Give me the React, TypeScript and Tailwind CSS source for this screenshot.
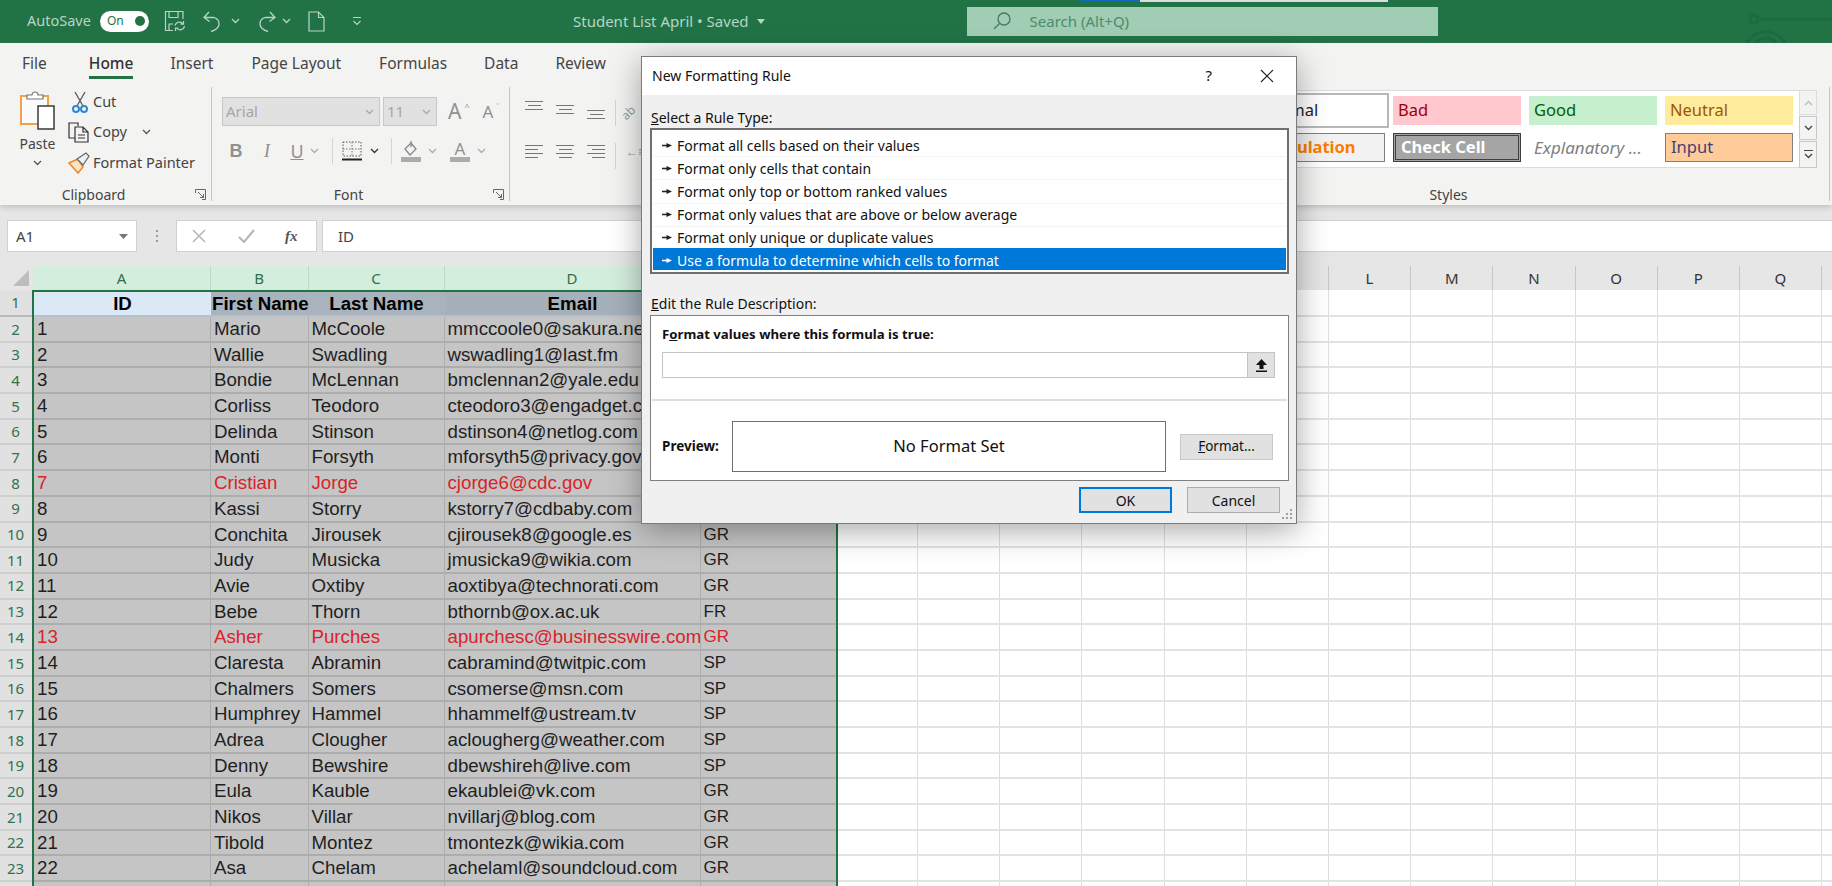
import type { ReactNode } from "react"

const ui = "font-['Noto_Sans',sans-serif]"
const cellFont = "font-['Liberation_Sans',Arial,sans-serif]"

const students: [string, string, string, string, string][] = [
	["1", "Mario", "McCoole", "mmccoole0@sakura.ne.jp", ""],
	["2", "Wallie", "Swadling", "wswadling1@last.fm", ""],
	["3", "Bondie", "McLennan", "bmclennan2@yale.edu", ""],
	["4", "Corliss", "Teodoro", "cteodoro3@engadget.com", ""],
	["5", "Delinda", "Stinson", "dstinson4@netlog.com", ""],
	["6", "Monti", "Forsyth", "mforsyth5@privacy.gov", ""],
	["7", "Cristian", "Jorge", "cjorge6@cdc.gov", ""],
	["8", "Kassi", "Storry", "kstorry7@cdbaby.com", ""],
	["9", "Conchita", "Jirousek", "cjirousek8@google.es", "GR"],
	["10", "Judy", "Musicka", "jmusicka9@wikia.com", "GR"],
	["11", "Avie", "Oxtiby", "aoxtibya@technorati.com", "GR"],
	["12", "Bebe", "Thorn", "bthornb@ox.ac.uk", "FR"],
	["13", "Asher", "Purches", "apurchesc@businesswire.com", "GR"],
	["14", "Claresta", "Abramin", "cabramind@twitpic.com", "SP"],
	["15", "Chalmers", "Somers", "csomerse@msn.com", "SP"],
	["16", "Humphrey", "Hammel", "hhammelf@ustream.tv", "SP"],
	["17", "Adrea", "Clougher", "aclougherg@weather.com", "SP"],
	["18", "Denny", "Bewshire", "dbewshireh@live.com", "SP"],
	["19", "Eula", "Kauble", "ekaublei@vk.com", "GR"],
	["20", "Nikos", "Villar", "nvillarj@blog.com", "GR"],
	["21", "Tibold", "Montez", "tmontezk@wikia.com", "GR"],
	["22", "Asa", "Chelam", "achelaml@soundcloud.com", "GR"],
	["", "", "", "", ""],
]

const ruleTypes = [
	"Format all cells based on their values",
	"Format only cells that contain",
	"Format only top or bottom ranked values",
	"Format only values that are above or below average",
	"Format only unique or duplicate values",
	"Use a formula to determine which cells to format",
]

const Chevron = ({ className = "", color = "#777" }: { className?: string; color?: string }) => (
	<svg width="9" height="6" viewBox="0 0 9 6" className={className} fill="none" stroke={color} strokeWidth="1.3">
		<path d="M1 1l3.5 3.5L8 1" />
	</svg>
)

const TitleIcons = () => (
	<div className="flex items-center ml-[15px] text-[#b9d4c5]">
		<svg width="22" height="22" viewBox="0 0 22 22" fill="none" stroke="currentColor" strokeWidth="1.2">
			<path d="M9 20.5H1.5v-19h17.5v7.5M5 1.5v6h9v-6M5 20v-6h4" />
			<path d="M11 15.5a4.5 4.5 0 0 1 8-1.5M20.5 16a4.5 4.5 0 0 1-8 2M19.5 11v3.2h-3M11.5 21v-3h3" />
		</svg>
		<svg width="22" height="22" viewBox="0 0 22 22" fill="none" stroke="currentColor" strokeWidth="1.3" className="ml-[16px]">
			<path d="M7 2L2 7.5l5.5 4M2.5 7.5H12a7 7 0 0 1 5 7c0 3-4 6-8 7" />
		</svg>
		<Chevron color="#b9d4c5" className="ml-[7px]" />
		<svg width="22" height="22" viewBox="0 0 22 22" fill="none" stroke="currentColor" strokeWidth="1.3" className="ml-[15px]">
			<path d="M15 2l5 5.5-5.5 4M19.5 7.5H10a7 7 0 0 0-5 7c0 3 4 6 8 7" />
		</svg>
		<Chevron color="#b9d4c5" className="ml-[5px]" />
		<svg width="17" height="21" viewBox="0 0 17 21" fill="none" stroke="currentColor" strokeWidth="1.2" className="ml-[17px]">
			<path d="M1 1h9.5L16 6.5V20H1zM10.5 1v5.5H16" />
		</svg>
		<svg width="10" height="10" viewBox="0 0 10 10" fill="none" stroke="currentColor" strokeWidth="1.1" className="ml-[27px]">
			<path d="M1 1.5h8M1.5 5l3.5 3.5L8.5 5" />
		</svg>
	</div>
)

const TitleBar = () => (
	<div className={`${ui} relative h-[43px] flex items-center bg-[#217346] text-[#b9d4c5] text-[15px] border-b border-[#2a7a4e]`}>
		<span className="ml-[27px] w-[65px] text-[14.5px]">AutoSave</span>
		<div className="ml-[8px] w-[49px] h-[21px] rounded-full bg-white flex items-center justify-between pl-[7px] pr-[4px] text-[#217346] text-[12px]">
			<span>On</span>
			<span className="w-[10px] h-[10px] rounded-full bg-[#217346]" />
		</div>
		<TitleIcons />
		<span className="ml-[211px] whitespace-nowrap">Student List April • Saved</span>
		<svg width="8" height="5" viewBox="0 0 8 5" className="ml-[8px]" fill="#b9d4c5">
			<path d="M0 0h8L4 5z" />
		</svg>
		<div className="ml-[202px] w-[471px] h-[29px] bg-[#a0cdb3] flex items-center text-[#4d8c6c]">
			<svg width="20" height="20" viewBox="0 0 20 20" fill="none" stroke="#3d7f5c" strokeWidth="1.3" className="ml-[25px]">
				<circle cx="12" cy="8" r="6" />
				<path d="M7.5 12.5L2 18" />
			</svg>
			<span className="ml-[18px]">Search (Alt+Q)</span>
		</div>
		<div className="absolute top-0 left-[1079px] w-[61px] h-[2px] bg-[#0f6cbd]" />
		<div className="absolute top-0 left-[1140px] w-[248px] h-[2px] bg-[#dcdcdc]" />
		<svg width="90" height="43" viewBox="0 0 90 43" fill="none" stroke="#1c6a40" strokeWidth="3" className="absolute right-0 top-0">
			<circle cx="12" cy="19" r="4" />
			<path d="M16 19h74M5 43a22 22 0 0 1 38 0M14 43a12 12 0 0 1 20 0" />
		</svg>
	</div>
)

const Tabs = () => (
	<div className={`${ui} h-[37px] pt-[4px] flex items-center text-[15.5px] text-[#444]`}>
		<span className="ml-[22px]">File</span>
		<div className="ml-[42px] relative font-medium text-[#333]">
			Home
			<span className="absolute left-0 right-0 top-[24px] h-[3px] bg-[#217346]" />
		</div>
		<span className="ml-[37px]">Insert</span>
		<span className="ml-[38px]">Page Layout</span>
		<span className="ml-[38px]">Formulas</span>
		<span className="ml-[37px]">Data</span>
		<span className="ml-[37px]">Review</span>
	</div>
)

const Launcher = () => (
	<svg width="11" height="11" viewBox="0 0 11 11" fill="none" stroke="#666" strokeWidth="1">
		<path d="M.5 4V.5H10.5V10.5H7M3 3l5.5 5.5M8.5 5v3.5H5" />
	</svg>
)

const RibbonGroup = ({ label, width, children, launcher }: { label: string; width: string; children: ReactNode; launcher?: boolean }) => (
	<div className={`${width} shrink-0 h-[114px] flex flex-col border-r border-[#c6c6c6] relative`}>
		<div className="flex-1 min-h-0">{children}</div>
		<div className={`h-[14px] flex items-center justify-center text-[14px] text-[#444] ${launcher ? "pr-[24px]" : ""}`}>{label}</div>
		{launcher && (
			<div className="absolute right-[5px] bottom-[1px]">
				<Launcher />
			</div>
		)}
	</div>
)

const Clipboard = () => (
	<div className="flex h-full">
		<div className="w-[68px] flex flex-col items-center pl-[7px] pt-[4px]">
			<svg width="36" height="39" viewBox="0 0 36 39" fill="none">
				<path d="M1 5h27v28H1z" fill="#fbfbfb" stroke="#eea24a" strokeWidth="2" />
				<path d="M7 8V4h5a3 3 0 0 1 6 0h5v4z" fill="#fff" stroke="#777" strokeWidth="1.2" />
				<path d="M18 15h16v23H18z" fill="#fff" stroke="#3a3a3a" strokeWidth="1.5" />
			</svg>
			<span className="text-[14px] text-[#444] mt-[4px] leading-[20px]">Paste</span>
			<Chevron className="mt-[6px]" color="#555" />
		</div>
		<div className="flex flex-col text-[14.5px] text-[#444]">
			<div className="h-[30px] flex items-center">
				<svg width="18" height="22" viewBox="0 0 18 22" fill="none" className="ml-[3px] mr-[4px]">
					<path d="M4 1l8 14M14 1L6 15" stroke="#555" strokeWidth="1.3" />
					<circle cx="5" cy="18" r="3" stroke="#2b88d8" strokeWidth="2" />
					<circle cx="13" cy="18" r="3" stroke="#2b88d8" strokeWidth="2" />
				</svg>
				Cut
			</div>
			<div className="h-[30px] flex items-center">
				<svg width="22" height="22" viewBox="0 0 22 22" fill="none" stroke="#333" strokeWidth="1.2" className="mr-[3px]">
					<path d="M7 17H1V2h9v3" />
					<path d="M7 6h8l5 5v10H7zM15 6v5h5M10 14h7M10 17h7" />
				</svg>
				Copy
				<Chevron className="ml-[15px]" color="#555" />
			</div>
			<div className="h-[31px] flex items-center">
				<svg width="22" height="22" viewBox="0 0 22 22" fill="none" className="mr-[3px]">
					<path d="M1 11l9-4 5 8-5 6z" fill="#fbe3c4" stroke="#ec8a2f" strokeWidth="1.6" />
					<path d="M9 7l9-6 3 3-6 9z" fill="#eee" stroke="#666" strokeWidth="1.2" />
				</svg>
				Format Painter
			</div>
		</div>
	</div>
)

const Combo = ({ text, width }: { text: string; width: string }) => (
	<div className={`${width} h-[29px] bg-[#e1e1e1] border border-[#c8c8c8] flex items-center justify-between pl-[3px] pr-[5px] text-[#a6a6a6] text-[15px]`}>
		<span>{text}</span>
		<Chevron color="#aaa" />
	</div>
)

const Font = () => (
	<div className="pl-[10px] pt-[10px] text-[#909090]">
		<div className="flex items-center gap-[3px]">
			<Combo text="Arial" width="w-[158px]" />
			<Combo text="11" width="w-[54px]" />
			<span className="ml-[8px] text-[21px] leading-none">A</span>
			<span className="text-[9px] -mt-[10px]">^</span>
			<span className="ml-[10px] text-[17px] leading-none">A</span>
			<span className="text-[9px] -mt-[10px]">˅</span>
		</div>
		<div className="flex items-center h-[22px] mt-[14px] text-[18px]">
			<span className="ml-[4px] w-[20px] text-center font-bold font-['Liberation_Sans',sans-serif]">B</span>
			<span className="ml-[11px] w-[20px] text-center italic font-['Liberation_Serif',serif]">I</span>
			<span className="ml-[10px] w-[20px] text-center underline">U</span>
			<Chevron color="#aaa" className="ml-[3px]" />
			<span className="ml-[13px] w-px h-[26px] bg-[#d4d4d4]" />
			<svg width="20" height="20" viewBox="0 0 20 20" fill="none" className="ml-[9px]">
				<path d="M1 1h18v14H1z" stroke="#555" strokeWidth="1" strokeDasharray="1.5 1.5" />
				<path d="M10 1v14M1 8h18" stroke="#777" strokeWidth="1" strokeDasharray="1.5 1.5" />
				<path d="M0 18.5h20" stroke="#222" strokeWidth="2" />
			</svg>
			<Chevron color="#333" className="ml-[8px]" />
			<span className="ml-[12px] w-px h-[26px] bg-[#d4d4d4]" />
			<svg width="20" height="22" viewBox="0 0 20 22" fill="none" className="ml-[9px]">
				<path d="M4 9l6-6 5 6-6 6z" stroke="#888" strokeWidth="1.3" />
				<path d="M10 1v6" stroke="#888" strokeWidth="1.3" />
				<rect y="17" width="20" height="5" fill="#ababab" />
			</svg>
			<Chevron color="#aaa" className="ml-[7px]" />
			<div className="ml-[13px] w-[20px] h-[22px] flex flex-col items-center">
				<span className="text-[17px] leading-[17px]">A</span>
				<span className="w-[20px] h-[5px] bg-[#ababab]" />
			</div>
			<Chevron color="#aaa" className="ml-[7px]" />
		</div>
	</div>
)

const AlignLines = ({ widths, className = "" }: { widths: string[]; className?: string }) => (
	<div className={`w-[18px] flex flex-col gap-[3px] ${className}`}>
		{widths.map((w, i) => (
			<span key={i} className={`${w} h-px bg-[#777]`} />
		))}
	</div>
)

const Alignment = () => (
	<div className="pl-[15px]">
		<div className="flex h-[46px]">
			<AlignLines widths={["w-full self-center", "w-[13px] self-center", "w-full self-center"]} className="pt-[14px]" />
			<AlignLines widths={["w-full", "w-[13px] self-center", "w-full"]} className="ml-[13px] pt-[18px]" />
			<AlignLines widths={["w-full", "w-[13px] self-center", "w-full"]} className="ml-[13px] pt-[23px]" />
			<span className="ml-[10px] mt-[13px] w-px h-[26px] bg-[#d4d4d4]" />
			<span className="ml-[10px] mt-[15px] text-[12px] text-[#999] -rotate-45">ab</span>
		</div>
		<div className="flex pt-[12px] items-start">
			<AlignLines widths={["w-full", "w-[13px]", "w-full", "w-[13px]"]} />
			<AlignLines widths={["w-full", "w-[13px] self-center", "w-full", "w-[13px] self-center"]} className="ml-[13px]" />
			<AlignLines widths={["w-full", "w-[13px] self-end", "w-full", "w-[13px] self-end"]} className="ml-[13px]" />
			<span className="ml-[10px] -mt-[2px] w-px h-[26px] bg-[#d4d4d4]" />
			<span className="ml-[10px] text-[12px] leading-[14px] text-[#999]">←≡</span>
		</div>
	</div>
)

const styleCell = "h-[29px] flex items-center pl-[5px] text-[16.5px] leading-none truncate"

const StylesGallery = () => (
	<div className="h-full flex justify-end pt-[3px]">
		<div className="w-[546px] h-[78px] bg-white border-y border-[#dcdcdc] grid grid-cols-[128px_128px_128px_128px] content-start gap-x-[8px] gap-y-[8px] pl-[4px] pt-[5px] items-start text-[#222]">
			<div className={`${styleCell} bg-white border-2 border-[#b8b8b8] -mx-[4px] -my-[3px] h-[35px]`}>Normal</div>
			<div className={`${styleCell} bg-[#ffc7ce] text-[#9c0006]`}>Bad</div>
			<div className={`${styleCell} bg-[#c6efce] text-[#006100]`}>Good</div>
			<div className={`${styleCell} bg-[#ffeb9c] text-[#9c5700]`}>Neutral</div>
			<div className={`${styleCell} h-[28px] bg-[#f2f2f2] border border-[#7f7f7f] text-[#fa7d00] font-bold text-[15.5px]`}>Calculation</div>
			<div className={`${styleCell} h-[28px] bg-[#a5a5a5] border-[3px] border-double border-[#3f3f3f] text-white font-bold text-[15.5px]`}>Check Cell</div>
			<div className={`${styleCell} h-[28px] italic text-[#7f7f7f] text-[17px]`}>Explanatory ...</div>
			<div className={`${styleCell} h-[28px] bg-[#ffcc99] border border-[#7f7f7f] text-[#3f3f76]`}>Input</div>
		</div>
		<div className="w-[18px] h-[78px] mr-[12px] flex flex-col gap-px">
			<div className="h-[25px] border border-[#dcdcdc] flex items-center justify-center">
				<Chevron className="rotate-180" color="#bbb" />
			</div>
			<div className="h-[24px] border border-[#c8c8c8] flex items-center justify-center">
				<Chevron color="#444" />
			</div>
			<div className="h-[27px] border border-[#c8c8c8] flex flex-col gap-[2px] items-center justify-center">
				<span className="w-[9px] h-px bg-[#444]" />
				<Chevron color="#444" />
			</div>
		</div>
	</div>
)

const Ribbon = () => (
	<div className={`${ui} h-[162px] bg-[#f3f3f2] shadow-[0_2px_6px_rgba(0,0,0,0.18)] relative`}>
		<Tabs />
		<div className="flex pt-[7px]">
			<RibbonGroup label="Clipboard" width="w-[212px]" launcher>
				<Clipboard />
			</RibbonGroup>
			<RibbonGroup label="Font" width="w-[298px]" launcher>
				<Font />
			</RibbonGroup>
			<RibbonGroup label="Alignment" width="w-[558px]">
				<Alignment />
			</RibbonGroup>
			<RibbonGroup label="Styles" width="w-[762px]">
				<StylesGallery />
			</RibbonGroup>
		</div>
	</div>
)

const FormulaBar = () => (
	<div className={`${ui} h-[61px] bg-[#e6e6e6] pt-[15px] flex text-[#444] text-[15px]`}>
		<div className="ml-[7px] w-[130px] h-[32px] bg-white border border-[#d0d0d0] flex items-center justify-between pl-[8px] pr-[8px]">
			A1
			<svg width="9" height="5" viewBox="0 0 9 5" fill="#777">
				<path d="M0 0h9L4.5 5z" />
			</svg>
		</div>
		<div className="w-[39px] flex flex-col items-center justify-center gap-[3px] h-[32px]">
			<span className="w-[2px] h-[2px] bg-[#999]" />
			<span className="w-[2px] h-[2px] bg-[#999]" />
			<span className="w-[2px] h-[2px] bg-[#999]" />
		</div>
		<div className="w-[141px] h-[32px] bg-white border border-[#d0d0d0] flex items-center text-[#aaa]">
			<svg width="14" height="14" viewBox="0 0 14 14" fill="none" stroke="#b5b5b5" strokeWidth="1.5" className="ml-[15px]">
				<path d="M1 1l12 12M13 1L1 13" />
			</svg>
			<svg width="17" height="14" viewBox="0 0 17 14" fill="none" stroke="#b5b5b5" strokeWidth="2" className="ml-[32px]">
				<path d="M1 8l5 5L16 1" />
			</svg>
			<span className="ml-[30px] italic font-bold text-[#555] font-['Liberation_Serif',serif] text-[15px]">fx</span>
		</div>
		<div className="ml-[5px] flex-1 h-[32px] bg-white border-y border-l border-[#d0d0d0] flex items-center pl-[15px]">ID</div>
	</div>
)

const RowNumbers = () => (
	<div className="w-[32px] shrink-0">
		<div className="h-[27px] bg-[#e1e1e1] border-b-2 border-[#b9b9b9] flex items-center justify-center text-[#2f7350] text-[15px] pr-[1px]">1</div>
		{students.map((_, i) => (
			<div key={i} className="h-[25.7px] bg-[#e1e1e1] border-b-2 border-[#cfcfcf] flex items-center justify-center text-[#2f7350] text-[15px] pr-[1px]">
				{i + 2}
			</div>
		))}
	</div>
)

const colWidths = ["w-[177px]", "w-[97.5px]", "w-[136px]", "w-[256px]", "w-[135.5px]"]

const SelectedBlock = () => (
	<div className={`${cellFont} w-[806px] shrink-0 border-x-2 border-t-2 border-[#217346] text-[18.7px] text-[#1f1f1f]`}>
		<div className="h-[25px] flex font-bold text-black border-b-2 border-[#b9c0c8]">
			<div className={`${colWidths[0]} bg-[#dbe8f6] text-center leading-[24px]`}>ID</div>
			<div className={`${colWidths[1]} bg-[#a9b3bd] pl-[1px] whitespace-nowrap leading-[24px] overflow-hidden`}>First Name</div>
			<div className={`${colWidths[2]} bg-[#a9b3bd] text-center leading-[24px]`}>Last Name</div>
			<div className={`${colWidths[3]} bg-[#a5b0bb] text-center leading-[24px]`}>Email</div>
			<div className={`${colWidths[4]} bg-[#a5b0bb]`} />
		</div>
		{students.map((row, i) => (
			<div key={i} className={`h-[25.7px] flex bg-[#c5c5c5] border-b-2 border-[#adadad] ${row[0] === "7" || row[0] === "13" ? "text-[#d8232a]" : ""}`}>
				{row.map((value, c) => (
					<div
						key={c}
						className={`${colWidths[c]} shrink-0 overflow-hidden whitespace-nowrap pl-[3px] leading-[23px] border-r border-[#adadad] last:border-r-0 last:text-[17px]`}>
						{value}
					</div>
				))}
			</div>
		))}
	</div>
)

const restCols = ["w-[80px]", "w-[82.2px]", "w-[82.2px]", "w-[82.2px]", "w-[82.2px]", "w-[82.2px]", "w-[82.2px]", "w-[82.2px]", "w-[82.2px]", "w-[82.2px]", "w-[82.2px]", "w-[82.2px]", "w-[82.2px]"]

const EmptyRow = ({ height }: { height: string }) => (
	<div className={`${height} flex border-b-2 border-[#e3e3e3]`}>
		{restCols.map((w, i) => (
			<div key={i} className={`${w} shrink-0 border-r border-[#dedede]`} />
		))}
	</div>
)

const ColumnHeaders = () => (
	<div className={`${cellFont} h-[24px] flex text-[15px]`}>
		<div className="w-[33px] shrink-0 bg-[#e6e6e6] relative">
			<svg width="20" height="20" viewBox="0 0 20 20" className="absolute right-[2px] bottom-[2px]" fill="#bdbdbd">
				<path d="M18 2v16H2z" />
			</svg>
		</div>
		{["A", "B", "C", "D", "E"].map((letter, i) => (
			<div key={letter} className={`${i === 0 ? "w-[178px]" : i === 4 ? "w-[137.5px]" : colWidths[i]} shrink-0 bg-[#d3eedd] border-r border-[#bcd9c7] text-[#2f6f4e] text-center leading-[24px] font-['Noto_Sans',sans-serif]`}>
				{letter}
			</div>
		))}
		{["F", "G", "H", "I", "J", "K", "L", "M", "N", "O", "P", "Q", "R"].map((letter, i) => (
			<div key={letter} className={`${restCols[i]} shrink-0 bg-[#e6e6e6] border-r border-[#c6c6c6] text-[#333] text-center leading-[24px] font-['Noto_Sans',sans-serif]`}>
				{letter}
			</div>
		))}
	</div>
)

const Sheet = () => (
	<div className="bg-white">
		<ColumnHeaders />
		<div className="flex">
			<RowNumbers />
			<SelectedBlock />
			<div className="flex-1 overflow-hidden">
				<EmptyRow height="h-[27px]" />
				{students.map((_, i) => (
					<EmptyRow key={i} height="h-[25.7px]" />
				))}
			</div>
		</div>
	</div>
)

const Arrow = ({ color }: { color: string }) => (
	<svg width="10" height="5" viewBox="0 0 10 5" fill={color} className="mr-[5px] shrink-0">
		<path d="M0 1.7h4.5V0L10 2.5 4.5 5V3.3H0z" />
	</svg>
)

const Button = ({ children, primary }: { children: ReactNode; primary?: boolean }) => (
	<div className={`w-[93px] h-[26px] flex items-center justify-center bg-[#e1e1e1] text-[#111] ${primary ? "border-2 border-[#0078d7]" : "border border-[#adadad]"}`}>{children}</div>
)

const FormattingRuleDialog = () => (
	<div className={`${ui} absolute left-[641px] top-[56px] w-[656px] h-[468px] bg-[#f0f0f0] border border-[#7b7b7b] text-[14px] text-[#111] shadow-[0_6px_30px_rgba(0,0,0,0.35)] flex flex-col`}>
		<div className="h-[38px] shrink-0 bg-white flex items-center pl-[10px] pb-[1px] text-[14px]">
			New Formatting Rule
			<span className="ml-auto mr-[48px] text-[15px]">?</span>
			<svg width="14" height="14" viewBox="0 0 14 14" fill="none" stroke="#222" strokeWidth="1.1" className="mr-[22px]">
				<path d="M1 1l12 12M13 1L1 13" />
			</svg>
		</div>
		<div className="px-[8px]">
			<div className="h-[18px] mt-[13px] flex items-center pl-[1px]">
				<span>
					<span className="underline">S</span>elect a Rule Type:
				</span>
			</div>
			<div className="w-[639px] h-[146px] mt-[2px] bg-white border-2 border-[#6f6f6f] pt-[4px] px-px">
				{ruleTypes.map((rule, i) =>
					i === 5 ? (
						<div key={rule} className="h-[22px] -mt-[2px] bg-[#0078d7] text-white flex items-center pl-[9px] pt-[3px]">
							<Arrow color="#fff" />
							{rule}
						</div>
					) : (
						<div key={rule} className="h-[23.2px] flex items-center pl-[9px] border-b border-[#f4f4f4]">
							<Arrow color="#222" />
							{rule}
						</div>
					),
				)}
			</div>
			<div className="h-[18px] mt-[20px] flex items-center pl-[1px]">
				<span>
					<span className="underline">E</span>dit the Rule Description:
				</span>
			</div>
			<div className="w-[639px] h-[166px] mt-[3px] bg-white border border-[#7f7f7f] text-[13.5px]">
				<div className="h-[18px] mt-[10px] ml-[11px] flex items-center font-bold text-[13.2px]">
					<span>
						F<span className="underline">o</span>rmat values where this formula is true:
					</span>
				</div>
				<div className="ml-[11px] mt-[8px] w-[613px] h-[26px] bg-white border border-[#c4c4c4] flex justify-end">
					<div className="w-[27px] bg-[#e1e1e1] border-l border-[#c4c4c4] flex items-center justify-center">
						<svg width="11" height="13" viewBox="0 0 11 13" fill="#111">
							<path d="M5.5 0L11 6H7.5v4h-4V6H0zM0 11.5h11V13H0z" />
						</svg>
					</div>
				</div>
				<div className="h-[2px] bg-[#dedede] mx-[1px] mt-[21px]" />
				<div className="flex items-center ml-[11px] mt-[20px]">
					<span className="font-bold w-[70px]">Preview:</span>
					<div className="w-[434px] h-[51px] border border-[#6f6f6f] flex items-center justify-center text-[16.5px]">No Format Set</div>
					<div className="ml-[14px] w-[93px] h-[26px] bg-[#e1e1e1] border border-[#c8c8c8] flex items-center justify-center">
						<span>
							<span className="underline">F</span>ormat...
						</span>
					</div>
				</div>
			</div>
			<div className="flex justify-end gap-[15px] mt-[6px] mr-[8px] text-[14px]">
				<Button primary>OK</Button>
				<Button>Cancel</Button>
			</div>
		</div>
		<svg width="11" height="11" viewBox="0 0 11 11" fill="#a0a0a0" className="absolute right-[3px] bottom-[3px]">
			<path d="M8 0h2v2H8zM4 4h2v2H4zM8 4h2v2H8zM0 8h2v2H0zM4 8h2v2H4zM8 8h2v2H8z" />
		</svg>
	</div>
)

export default function App() {
	return (
		<div className="relative w-[1832px] h-[886px] overflow-hidden bg-white">
			<TitleBar />
			<Ribbon />
			<FormulaBar />
			<Sheet />
			<FormattingRuleDialog />
		</div>
	)
}
